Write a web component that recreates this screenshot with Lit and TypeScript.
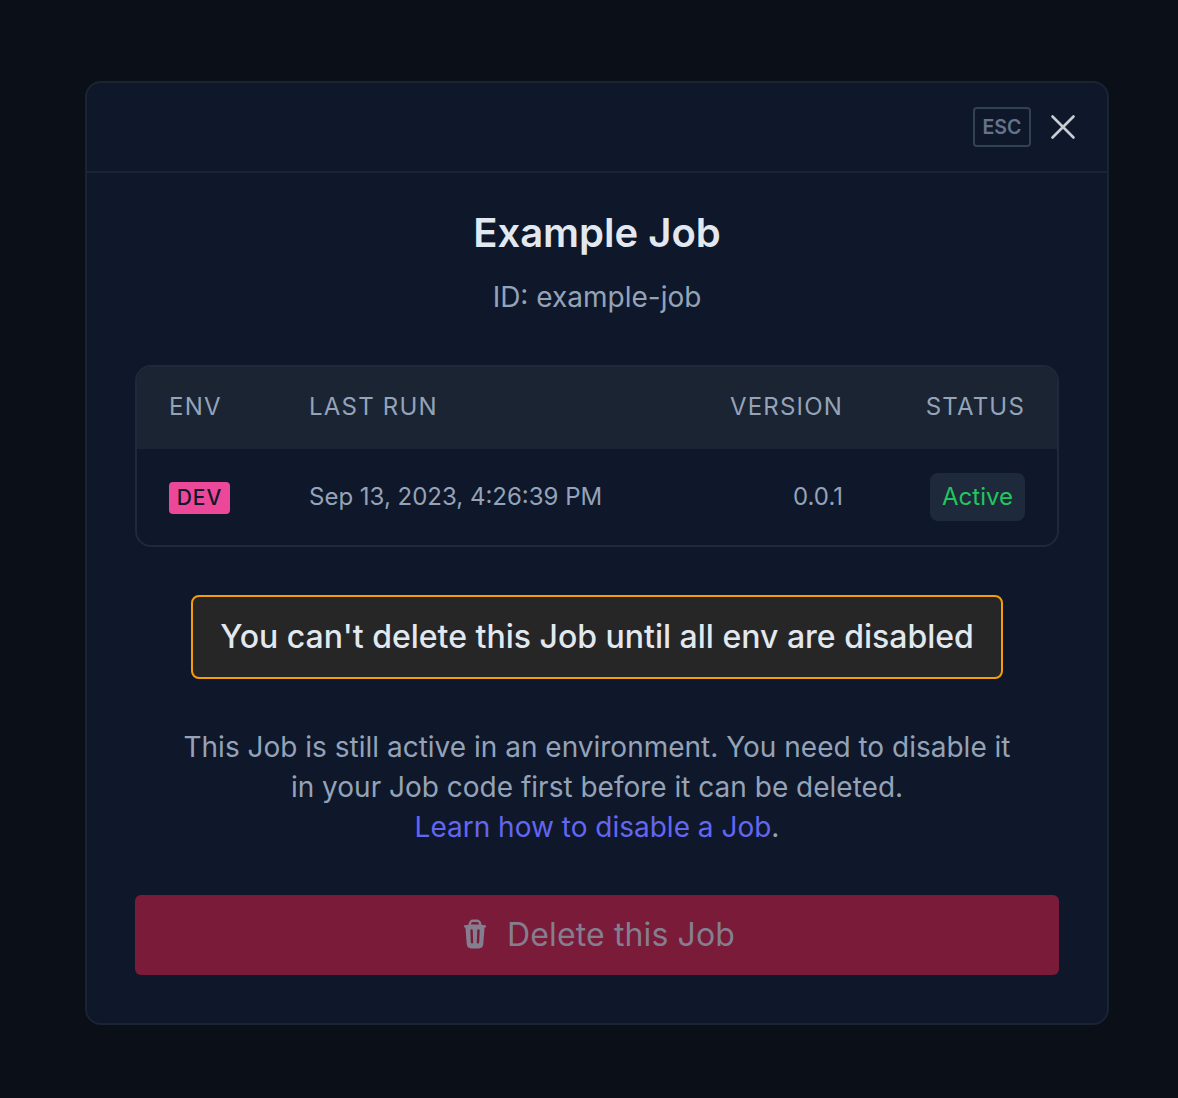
import { LitElement, html, css } from "lit";
import { customElement } from "lit/decorators.js";

@customElement("app-root")
export class AppRoot extends LitElement {
  static styles = css`
    :host {
      display: block;
      min-height: 1098px;
      box-sizing: border-box;
      padding: 81px 69px 73px 85px;
      background: #0b1018;
      font-family: Inter, "Liberation Sans", sans-serif;
      color: #94a3b8;
    }
    * { box-sizing: border-box; }
    .modal {
      border: 2px solid #1a2433;
      border-radius: 16px;
      background: #0f172a;
      height: 944px;
    }
    .head {
      height: 90px;
      border-bottom: 2px solid #1a2433;
      display: flex;
      align-items: center;
      justify-content: flex-end;
      gap: 11px;
      padding: 0 23px 0 0;
    }
    .esc {
      width: 58px;
      height: 40px;
      border: 2px solid #334155;
      border-radius: 4px;
      display: flex;
      align-items: center;
      justify-content: center;
      font-size: 19.5px;
      font-weight: 600;
      color: #64748b;
    }
    .close { width: 42px; height: 42px; color: #c8ccd3; display: block; }
    .body {
      padding: 0 48px;
      display: flex;
      flex-direction: column;
      align-items: center;
    }
    h1 {
      margin: 36px 0 0;
      font-size: 40px;
      line-height: 48px;
      font-weight: 600;
      color: #e2e8f0;
    }
    .id {
      margin: 20px 0 0;
      font-size: 28px;
      line-height: 40px;
    }
    .table {
      margin-top: 48px;
      width: 924px;
      border: 2px solid #1e293b;
      border-radius: 16px;
      overflow: hidden;
    }
    .row {
      display: grid;
      grid-template-columns: 140px 1fr 120px 182px;
      align-items: center;
      padding: 0 32px;
    }
    .row.th {
      height: 82px;
      padding-bottom: 4px;
      background: #1a2433;
      font-size: 24px;
      letter-spacing: 1.2px;
    }
    .row.td { height: 96px; font-size: 24px; }
    .right { text-align: right; }
    .lift { padding-bottom: 2px; }
    .cell-end { display: flex; justify-content: flex-end; }
    .dev {
      display: inline-block;
      width: 61px;
      height: 32px;
      margin-top: 2px;
      line-height: 32px;
      text-align: center;
      border-radius: 4px;
      background: #ec4899;
      color: #0f172a;
      font-size: 21px;
      font-weight: 500;
      letter-spacing: 1px;
    }
    .active {
      height: 48px;
      line-height: 48px;
      padding: 0 12px;
      border-radius: 8px;
      background: #1e293b;
      color: #22c55e;
      font-size: 24px;
    }
    .warn {
      margin-top: 48px;
      width: 812px;
      height: 84px;
      padding-bottom: 2px;
      border: 2px solid #f59e0b;
      border-radius: 8px;
      background: #262626;
      color: #e2e8f0;
      font-size: 32px;
      font-weight: 500;
      display: flex;
      align-items: center;
      justify-content: center;
    }
    .msg {
      margin: 48px 0 0;
      font-size: 28px;
      line-height: 40px;
      text-align: center;
    }
    .msg a { color: #6366f1; text-decoration: none; }
    .del {
      margin-top: 48px;
      width: 924px;
      height: 80px;
      border: 0;
      padding: 0 0 2px;
      border-radius: 6px;
      background: #7a1b3a;
      color: #857e8f;
      font: inherit;
      font-size: 32px;
      letter-spacing: 0.13px;
      display: flex;
      align-items: center;
      justify-content: center;
      gap: 16px;
    }
    .trash { width: 32px; height: 32px; display: block; }
  `;

  render() {
    return html`
      <div class="modal">
        <div class="head">
          <span class="esc">ESC</span>
          <svg class="close" viewBox="0 0 24 24" fill="none" stroke="currentColor" stroke-width="1.5">
            <path stroke-linecap="round" stroke-linejoin="round" d="M6 18L18 6M6 6l12 12" />
          </svg>
        </div>
        <div class="body">
          <h1>Example Job</h1>
          <p class="id">ID: example-job</p>
          <div class="table">
            <div class="row th">
              <span>ENV</span><span>LAST RUN</span>
              <span class="right">VERSION</span><span class="right">STATUS</span>
            </div>
            <div class="row td">
              <span><span class="dev">DEV</span></span>
              <span class="lift">Sep 13, 2023, 4:26:39 PM</span>
              <span class="right lift">0.0.1</span>
              <span class="cell-end"><span class="active">Active</span></span>
            </div>
          </div>
          <div class="warn">You can't delete this Job until all env are disabled</div>
          <p class="msg">
            This Job is still active in an environment. You need to disable it<br />
            in your Job code first before it can be deleted.<br />
            <a href="#">Learn how to disable a Job</a>.
          </p>
          <button class="del" disabled>
            <svg class="trash" viewBox="0 0 20 20" fill="currentColor">
              <path fill-rule="evenodd" clip-rule="evenodd" d="M8.75 1A2.75 2.75 0 006 3.75v.443c-.795.077-1.584.176-2.365.298a.75.75 0 10.23 1.482l.149-.022.841 10.518A2.75 2.75 0 007.596 19h4.807a2.75 2.75 0 002.742-2.53l.841-10.52.149.023a.75.75 0 00.23-1.482A41.03 41.03 0 0014 4.193V3.75A2.75 2.75 0 0011.25 1h-2.5zM10 4c.84 0 1.673.025 2.5.075V3.75c0-.69-.56-1.25-1.25-1.25h-2.5c-.69 0-1.25.56-1.25 1.25v.325C8.327 4.025 9.16 4 10 4zM8.58 7.72a.75.75 0 00-1.5.06l.3 7.5a.75.75 0 101.5-.06l-.3-7.5zm4.34.06a.75.75 0 10-1.5-.06l-.3 7.5a.75.75 0 101.5.06l.3-7.5z" />
            </svg>
            Delete this Job
          </button>
        </div>
      </div>
    `;
  }
}
